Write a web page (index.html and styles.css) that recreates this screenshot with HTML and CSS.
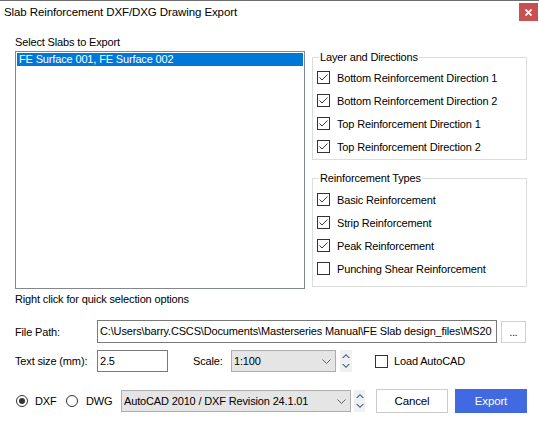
FILE: index.html
```html
<!DOCTYPE html>
<html>
<head>
<meta charset="utf-8">
<link rel="stylesheet" href="styles.css">
</head>
<body>
<div class="window">
  <div class="titlebar">
    <span class="title">Slab Reinforcement DXF/DXG Drawing Export</span>
    <div class="close"><svg width="7" height="7" viewBox="0 0 7 7"><path d="M0.5 0.5 L6.5 6.5 M6.5 0.5 L0.5 6.5" stroke="#fff" stroke-width="1.8"/></svg></div>
  </div>
  <div class="main">
    <div class="left">
      <div class="label">Select Slabs to Export</div>
      <div class="listbox">
        <div class="item selected">FE Surface 001, FE Surface 002</div>
      </div>
    </div>
    <div class="right">
      <fieldset class="group g1">
        <legend>Layer and Directions</legend>
        <div class="check"><span class="box"><svg width="11" height="11" viewBox="0 0 11 11"><path d="M1.5 5.5 L4 8 L9.5 2.5" fill="none" stroke="#3c3c3c" stroke-width="1"/></svg></span>Bottom Reinforcement Direction 1</div>
        <div class="check"><span class="box"><svg width="11" height="11" viewBox="0 0 11 11"><path d="M1.5 5.5 L4 8 L9.5 2.5" fill="none" stroke="#3c3c3c" stroke-width="1"/></svg></span>Bottom Reinforcement Direction 2</div>
        <div class="check"><span class="box"><svg width="11" height="11" viewBox="0 0 11 11"><path d="M1.5 5.5 L4 8 L9.5 2.5" fill="none" stroke="#3c3c3c" stroke-width="1"/></svg></span>Top Reinforcement Direction 1</div>
        <div class="check"><span class="box"><svg width="11" height="11" viewBox="0 0 11 11"><path d="M1.5 5.5 L4 8 L9.5 2.5" fill="none" stroke="#3c3c3c" stroke-width="1"/></svg></span>Top Reinforcement Direction 2</div>
      </fieldset>
      <fieldset class="group g2">
        <legend>Reinforcement Types</legend>
        <div class="check"><span class="box"><svg width="11" height="11" viewBox="0 0 11 11"><path d="M1.5 5.5 L4 8 L9.5 2.5" fill="none" stroke="#3c3c3c" stroke-width="1"/></svg></span>Basic Reinforcement</div>
        <div class="check"><span class="box"><svg width="11" height="11" viewBox="0 0 11 11"><path d="M1.5 5.5 L4 8 L9.5 2.5" fill="none" stroke="#3c3c3c" stroke-width="1"/></svg></span>Strip Reinforcement</div>
        <div class="check"><span class="box"><svg width="11" height="11" viewBox="0 0 11 11"><path d="M1.5 5.5 L4 8 L9.5 2.5" fill="none" stroke="#3c3c3c" stroke-width="1"/></svg></span>Peak Reinforcement</div>
        <div class="check"><span class="box"></span>Punching Shear Reinforcement</div>
      </fieldset>
    </div>
  </div>
  <div class="hint">Right click for quick selection options</div>
  <div class="row path-row">
    <span class="row-label">File Path:</span>
    <div class="textbox path">C:\Users\barry.CSCS\Documents\Masterseries Manual\FE Slab design_files\MS20</div>
    <div class="browse">...</div>
  </div>
  <div class="row size-row">
    <span class="row-label">Text size (mm):</span>
    <div class="textbox size">2.5</div>
    <span class="scale-label">Scale:</span>
    <div class="combo scale"><span class="combo-text">1:100</span><svg class="chev" width="9" height="5" viewBox="0 0 9 5"><path d="M0.5 0.5 L4.5 4.5 L8.5 0.5" fill="none" stroke="#606060" stroke-width="1"/></svg></div>
    <div class="spinner"><svg width="8" height="5" viewBox="0 0 8 5"><path d="M0 5 L4 1 L8 5 L6.5 5 L4 2.5 L1.5 5 Z" fill="#3e5f8a"/></svg><svg width="8" height="5" viewBox="0 0 8 5"><path d="M0 0 L4 4 L8 0 L6.5 0 L4 2.5 L1.5 0 Z" fill="#3e5f8a"/></svg></div>
    <div class="check load"><span class="box"></span>Load AutoCAD</div>
  </div>
  <div class="row bottom-row">
    <div class="radio-item dxf"><span class="radio on"><span class="dot"></span></span>DXF</div>
    <div class="radio-item dwg"><span class="radio"></span>DWG</div>
    <div class="combo version"><span class="combo-text">AutoCAD 2010 / DXF Revision 24.1.01</span><svg class="chev" width="9" height="5" viewBox="0 0 9 5"><path d="M0.5 0.5 L4.5 4.5 L8.5 0.5" fill="none" stroke="#606060" stroke-width="1"/></svg></div>
    <div class="spinner small"><svg width="8" height="5" viewBox="0 0 8 5"><path d="M0 5 L4 1 L8 5 L6.5 5 L4 2.5 L1.5 5 Z" fill="#3e5f8a"/></svg><svg width="8" height="5" viewBox="0 0 8 5"><path d="M0 0 L4 4 L8 0 L6.5 0 L4 2.5 L1.5 0 Z" fill="#3e5f8a"/></svg></div>
    <div class="btn cancel">Cancel</div>
    <div class="btn export">Export</div>
  </div>
</div>
</body>
</html>
```

FILE: styles.css
```css
* { box-sizing: border-box; }
html, body { margin: 0; padding: 0; background: #fff; }
body {
  font-family: "Liberation Sans", Arial, sans-serif;
  font-size: 11px;
  color: #000;
  letter-spacing: -0.15px;
}
.window {
  width: 539px;
  height: 425px;
  border-top: 1px solid #6e6e6e;
  overflow: hidden;
}
.titlebar {
  display: flex;
  align-items: flex-start;
  height: 34px;
  padding-left: 4px;
}
.title {
  font-size: 11.5px;
  line-height: 14px;
  padding-top: 4px;
  letter-spacing: -0.1px;
}
.close {
  margin-left: auto;
  margin-top: 2px;
  margin-right: 1px;
  width: 19px;
  height: 18px;
  background: #c75050;
  display: flex;
  align-items: center;
  justify-content: center;
}
.main {
  display: grid;
  grid-template-columns: 290px 215px;
  column-gap: 7px;
  padding-left: 15px;
}
.label { line-height: 14px; height: 14px; }
.listbox {
  margin-top: 2px;
  height: 238px;
  border: 1px solid #828790;
  padding: 1px;
}
.item {
  height: 13px;
  line-height: 13px;
  padding-left: 2px;
  white-space: nowrap;
}
.item.selected { background: #0078d7; color: #fff; }
.group {
  margin: 0;
  border: 1px solid #dcdcdc;
  padding: 3px 0 1px 4px;
  min-width: 0;
}
.group legend {
  padding: 0 1px;
  margin-left: 2px;
  line-height: 12px;
}
.g1 { margin-top: 16px; }
.g2 { margin-top: 12px; padding-top: 4px; padding-bottom: 6px; }
.check {
  display: flex;
  align-items: center;
  height: 23px;
  white-space: nowrap;
}
.box {
  width: 13px;
  height: 13px;
  border: 1px solid #333;
  margin-right: 7px;
  flex-shrink: 0;
  display: flex;
  align-items: center;
  justify-content: center;
  background: #fff;
}
.hint {
  margin-top: 3px;
  line-height: 14px;
  padding-left: 15px;
}
.row {
  display: flex;
  align-items: center;
  padding-left: 15px;
  padding-right: 12px;
}
.row-label { width: 82px; flex-shrink: 0; }
.path-row { margin-top: 14px; height: 23px; }
.textbox {
  border: 1px solid #7a7a7a;
  background: #fff;
  padding: 0 2px;
  white-space: nowrap;
  overflow: hidden;
  flex-shrink: 0;
}
.textbox.path { width: 400px; height: 23px; line-height: 21px; }
.browse {
  align-self: flex-end;
  margin-left: 4px;
  width: 25px;
  height: 22px;
  border: 1px solid #d0d0d0;
  text-align: center;
  line-height: 22px;
  font-size: 10px;
}
.size-row { margin-top: 7px; height: 22px; }
.textbox.size { width: 71px; height: 22px; line-height: 20px; }
.scale-label { margin-left: 25px; width: 38px; flex-shrink: 0; }
.combo {
  display: flex;
  align-items: center;
  background: #e5e5e5;
  border: 1px solid #adadad;
  height: 22px;
  flex-shrink: 0;
  padding-left: 2px;
}
.combo-text { flex: 1; white-space: nowrap; overflow: hidden; }
.chev { margin-right: 4px; flex-shrink: 0; }
.combo.scale { width: 105px; }
.spinner {
  margin-left: 4px;
  width: 12px;
  height: 22px;
  background: #f0f0f0;
  display: flex;
  flex-direction: column;
  align-items: center;
  justify-content: space-between;
  padding: 3px 0 3px;
  flex-shrink: 0;
}
.check.load { margin-left: 23px; }
.check.load .box { margin-right: 6px; }
.bottom-row { margin-top: 17px; height: 24px; }
.radio-item {
  display: flex;
  align-items: center;
  flex-shrink: 0;
}
.radio-item.dxf { width: 50px; margin-left: 1px; }
.radio-item.dwg { width: 55px; }
.radio {
  width: 12px;
  height: 12px;
  border: 1px solid #333;
  border-radius: 50%;
  margin-right: 7px;
  display: flex;
  align-items: center;
  justify-content: center;
  flex-shrink: 0;
}
.radio-item.dwg .radio { margin-right: 8px; }
.dot {
  width: 6px;
  height: 6px;
  border-radius: 50%;
  background: #333;
}
.combo.version { width: 230px; }
.spinner.small { margin-left: 3px; width: 11px; }
.btn {
  height: 24px;
  width: 72px;
  display: flex;
  align-items: center;
  justify-content: center;
  font-size: 11.5px;
  flex-shrink: 0;
}
.cancel {
  margin-left: auto;
  border: 1px solid #cccccc;
  background: #fff;
}
.export {
  margin-left: 7px;
  background: #4169e1;
  color: #fff;
}
```
